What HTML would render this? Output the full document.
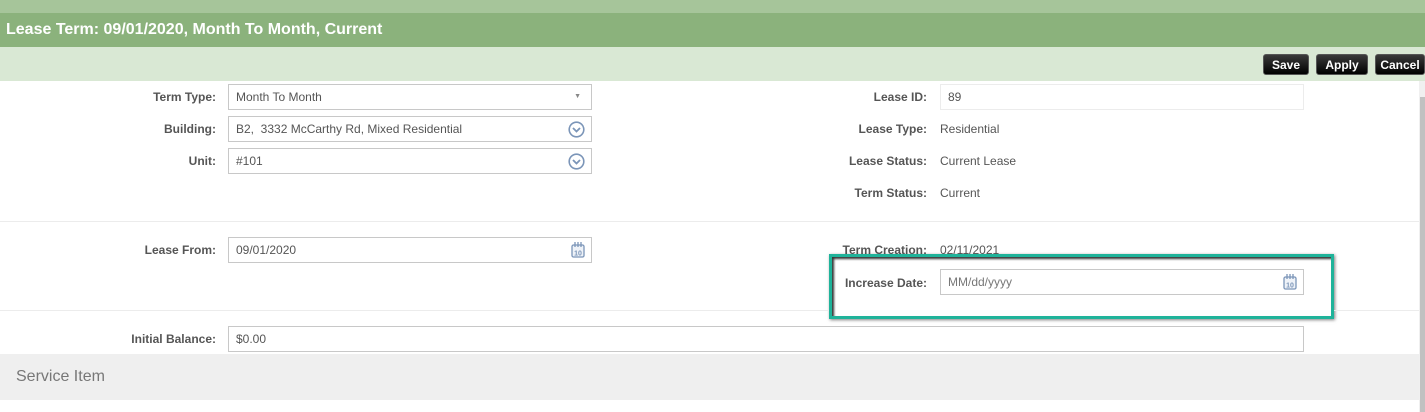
<!DOCTYPE html>
<html><head><meta charset="utf-8"><style>
*{box-sizing:border-box;margin:0;padding:0}
body{width:1425px;height:412px;overflow:hidden;background:#fff;font-family:"Liberation Sans",Arial,sans-serif;font-size:12px;color:#555;position:relative}
.a{position:absolute}
.lbl{position:absolute;font-weight:bold;color:#555;text-align:right;width:200px;line-height:14px}
.val{position:absolute;color:#555;line-height:14px}
.inp{position:absolute;border:1px solid #c8c8c8;background:#fff;height:26px;padding-left:7px;line-height:24px;color:#555}
.btn{position:absolute;top:54px;height:21px;border-radius:3px;background:linear-gradient(#3a3a3a,#000);color:#fff;font-weight:bold;font-size:12px;line-height:21px;text-align:center;border:1px solid #555}
.ico{position:absolute;right:6px;top:4px}
</style></head><body>
<div class="a" style="left:0;top:0;width:1425px;height:13px;background:#a6c59a"></div>
<div class="a" style="left:0;top:13px;width:1425px;height:34px;background:#8bb27c"></div>
<div class="a" style="left:6px;top:21px;color:#fff;font-weight:bold;font-size:16px;line-height:18px">Lease Term: 09/01/2020, Month To Month, Current</div>
<div class="a" style="left:0;top:47px;width:1425px;height:34px;background:#d9e8d4"></div>
<div class="btn" style="left:1263px;width:46px">Save</div>
<div class="btn" style="left:1316px;width:52px">Apply</div>
<div class="btn" style="left:1375px;width:50px">Cancel</div>
<div class="a" style="left:1420px;top:97px;width:5px;height:315px;background:#c1c1c1"></div>
<div class="a" style="left:1419px;top:81px;width:6px;height:331px;background:#f0f0f0;z-index:-1"></div>

<div class="lbl" style="left:16px;top:90px">Term Type:</div>
<div class="inp" style="left:228px;top:84px;width:364px">Month To Month<span style="position:absolute;right:10px;top:0;font-size:7px;color:#888">▼</span></div>
<div class="lbl" style="left:16px;top:122px">Building:</div>
<div class="inp" style="left:228px;top:116px;width:364px">B2,&nbsp; 3332 McCarthy Rd, Mixed Residential<svg class="ico" width="17" height="17" viewBox="0 0 17 17"><circle cx="8.5" cy="8.5" r="7.3" fill="none" stroke="#7b95b8" stroke-width="1.6"/><path d="M5 7l3.5 3.5L12 7" fill="none" stroke="#7b95b8" stroke-width="1.8"/></svg></div>
<div class="lbl" style="left:16px;top:154px">Unit:</div>
<div class="inp" style="left:228px;top:148px;width:364px">#101<svg class="ico" width="17" height="17" viewBox="0 0 17 17"><circle cx="8.5" cy="8.5" r="7.3" fill="none" stroke="#7b95b8" stroke-width="1.6"/><path d="M5 7l3.5 3.5L12 7" fill="none" stroke="#7b95b8" stroke-width="1.8"/></svg></div>

<div class="lbl" style="left:727px;top:90px">Lease ID:</div>
<div class="inp" style="left:940px;top:84px;width:364px;border-color:#ececec">89</div>
<div class="lbl" style="left:727px;top:122px">Lease Type:</div>
<div class="val" style="left:940px;top:122px">Residential</div>
<div class="lbl" style="left:727px;top:154px">Lease Status:</div>
<div class="val" style="left:940px;top:154px">Current Lease</div>
<div class="lbl" style="left:727px;top:186px">Term Status:</div>
<div class="val" style="left:940px;top:186px">Current</div>

<div class="a" style="left:0;top:221px;width:1419px;height:1px;background:#ececec"></div>
<div class="lbl" style="left:16px;top:243px">Lease From:</div>
<div class="inp" style="left:228px;top:237px;width:364px">09/01/2020<svg class="ico" width="14" height="18" viewBox="0 0 14 18" style="top:3px;right:6px"><rect x="1" y="4" width="12" height="12" rx="1.5" fill="#eef2f8" stroke="#7b95b8" stroke-width="1.3"/><path d="M4 1v5M7 1v5M10 1v5" stroke="#7b95b8" stroke-width="1.3"/><text x="7" y="14.5" font-size="7" font-weight="bold" text-anchor="middle" fill="#7b95b8" font-family="Liberation Sans">10</text></svg></div>

<div class="lbl" style="left:727px;top:243px">Term Creation:</div>
<div class="val" style="left:940px;top:243px">02/11/2021</div>
<div class="a" style="left:829px;top:254px;width:505px;height:65px;border:3px solid #1fb39a;box-shadow:inset 2px 2px 2px #333,1px 1px 3px rgba(0,0,0,.5);background:#fff"></div>
<div class="lbl" style="left:727px;top:276px">Increase Date:</div>
<div class="inp" style="left:940px;top:269px;width:364px;color:#777">MM/dd/yyyy<svg class="ico" width="14" height="18" viewBox="0 0 14 18" style="top:3px;right:6px"><rect x="1" y="4" width="12" height="12" rx="1.5" fill="#eef2f8" stroke="#7b95b8" stroke-width="1.3"/><path d="M4 1v5M7 1v5M10 1v5" stroke="#7b95b8" stroke-width="1.3"/><text x="7" y="14.5" font-size="7" font-weight="bold" text-anchor="middle" fill="#7b95b8" font-family="Liberation Sans">10</text></svg></div>

<div class="a" style="left:0;top:310px;width:829px;height:1px;background:#ececec"></div>
<div class="a" style="left:1334px;top:310px;width:85px;height:1px;background:#ececec"></div>
<div class="lbl" style="left:16px;top:332px">Initial Balance:</div>
<div class="inp" style="left:228px;top:326px;width:1076px">$0.00</div>

<div class="a" style="left:0;top:354px;width:1419px;height:46px;background:#efefef"></div>
<div class="a" style="left:16px;top:368px;font-size:16px;color:#777;line-height:18px">Service Item</div>
</body></html>
